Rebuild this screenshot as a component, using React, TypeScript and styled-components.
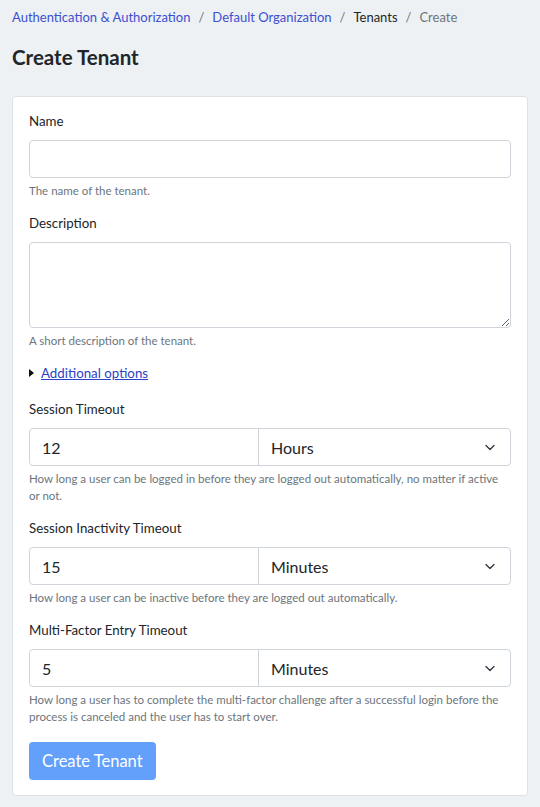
import styled, { createGlobalStyle } from "styled-components";

const GlobalStyle = createGlobalStyle`
  body {
    margin: 0;
    background: #edf1f4;
    font-family: Lato, "Noto Sans", sans-serif;
    color: #212529;
  }
`;

const Page = styled.div`
  padding: 8px 12px 11px;
`;

const Breadcrumb = styled.nav`
  display: flex;
  align-items: center;
  gap: 8px;
  font-size: 13px;
  line-height: 18px;
`;

const Crumb = styled.span<{ $kind: "link" | "plain" | "current" }>`
  color: ${(p) =>
    p.$kind === "link" ? "#3d4fd1" : p.$kind === "current" ? "#6c757d" : "#212529"};
`;

const Sep = styled.span`
  color: #6c757d;
`;

const Title = styled.h1`
  margin: 18px 0 26px;
  font-size: 20.5px;
  line-height: 26px;
  font-weight: 700;
  color: #212529;
`;

const Card = styled.div`
  background: #fff;
  border: 1px solid #dee2e6;
  border-radius: 4px;
  padding: 14px 16px 15px;
`;

const Field = styled.div`
  margin-bottom: 14px;
`;

const Label = styled.label`
  display: block;
  font-size: 13.3px;
  line-height: 20px;
  margin-bottom: 9px;
  color: #212529;
`;

const TextInput = styled.input`
  display: block;
  box-sizing: border-box;
  width: 100%;
  height: 38px;
  border: 1px solid #ced4da;
  border-radius: 4px;
  padding: 0 12px;
  font: inherit;
  font-size: 16px;
  color: #212529;
  background: #fff;
`;

const TextArea = styled.textarea`
  display: block;
  box-sizing: border-box;
  width: 100%;
  height: 86px;
  border: 1px solid #ced4da;
  border-radius: 4px;
  padding: 6px 12px;
  font: inherit;
  font-size: 16px;
`;

const Help = styled.div`
  margin-top: 4px;
  font-size: 11.5px;
  line-height: 17px;
  color: #6c757d;
`;

const Details = styled.div`
  display: flex;
  align-items: center;
  gap: 7px;
  font-size: 13.3px;
  line-height: 20px;
  margin: 14px 0 16px;
`;

const Triangle = styled.span`
  width: 0;
  height: 0;
  border-top: 4px solid transparent;
  border-bottom: 4px solid transparent;
  border-left: 5px solid #111;
`;

const DetailsLink = styled.a`
  color: #2a43c6;
  text-decoration: underline;
`;

const Group = styled.div`
  display: flex;
  height: 38px;
  border: 1px solid #ced4da;
  border-radius: 4px;
  box-sizing: border-box;
`;

const GroupNumber = styled.div`
  width: 229px;
  box-sizing: border-box;
  display: flex;
  align-items: center;
  padding: 0 12px;
  font-size: 16px;
  border-right: 1px solid #ced4da;
`;

const GroupSelect = styled.div`
  flex: 1;
  display: flex;
  align-items: center;
  justify-content: space-between;
  padding: 0 15px 0 12px;
  font-size: 16px;
`;

const Button = styled.button`
  margin-top: 3px;
  height: 38px;
  padding: 0 13px;
  border: none;
  border-radius: 4px;
  background: #63a0fc;
  color: #fff;
  font: inherit;
  font-size: 16.5px;
`;

const Chevron = () => (
  <svg width="10" height="7" viewBox="0 0 10 7" fill="none">
    <path d="M1 1.5 5 5.5l4-4" stroke="#343a40" strokeWidth="1.4" strokeLinecap="round" strokeLinejoin="round" />
  </svg>
);

type TimeoutProps = { label: string; value: string; unit: string; help: string };

function TimeoutField({ label, value, unit, help }: TimeoutProps) {
  return (
    <Field>
      <Label>{label}</Label>
      <Group>
        <GroupNumber>{value}</GroupNumber>
        <GroupSelect>
          {unit}
          <Chevron />
        </GroupSelect>
      </Group>
      <Help>{help}</Help>
    </Field>
  );
}

export default function App() {
  return (
    <Page>
      <GlobalStyle />
      <Breadcrumb>
        <Crumb $kind="link">Authentication &amp; Authorization</Crumb>
        <Sep>/</Sep>
        <Crumb $kind="link">Default Organization</Crumb>
        <Sep>/</Sep>
        <Crumb $kind="plain">Tenants</Crumb>
        <Sep>/</Sep>
        <Crumb $kind="current">Create</Crumb>
      </Breadcrumb>
      <Title>Create Tenant</Title>
      <Card>
        <Field>
          <Label>Name</Label>
          <TextInput />
          <Help>The name of the tenant.</Help>
        </Field>
        <Field>
          <Label>Description</Label>
          <TextArea />
          <Help>A short description of the tenant.</Help>
        </Field>
        <Details>
          <Triangle />
          <DetailsLink href="#">Additional options</DetailsLink>
        </Details>
        <TimeoutField
          label="Session Timeout"
          value="12"
          unit="Hours"
          help="How long a user can be logged in before they are logged out automatically, no matter if active or not."
        />
        <TimeoutField
          label="Session Inactivity Timeout"
          value="15"
          unit="Minutes"
          help="How long a user can be inactive before they are logged out automatically."
        />
        <TimeoutField
          label="Multi-Factor Entry Timeout"
          value="5"
          unit="Minutes"
          help="How long a user has to complete the multi-factor challenge after a successful login before the process is canceled and the user has to start over."
        />
        <Button>Create Tenant</Button>
      </Card>
    </Page>
  );
}
